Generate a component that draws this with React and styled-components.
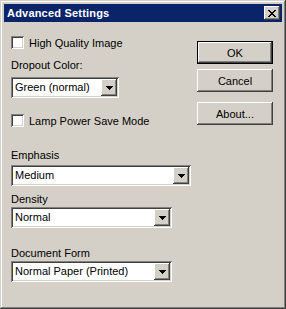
import React from 'react';
import styled, { createGlobalStyle } from 'styled-components';

const GlobalStyle = createGlobalStyle`
  html, body {
    margin: 0;
    padding: 0;
    background: #d4d0c8;
  }
  * {
    box-sizing: border-box;
  }
`;

const raised = `
  box-shadow:
    inset -1px -1px #404040,
    inset 1px 1px #ffffff,
    inset -2px -2px #808080,
    inset 2px 2px #d4d0c8;
`;

const sunken = `
  box-shadow:
    inset 1px 1px #808080,
    inset -1px -1px #ffffff,
    inset 2px 2px #404040,
    inset -2px -2px #d4d0c8;
`;

const Window = styled.div`
  width: 286px;
  height: 309px;
  padding: 4px;
  background: #d4d0c8;
  font-family: "Liberation Sans", Arial, sans-serif;
  font-size: 11px;
  color: #000;
  box-shadow:
    inset -1px -1px #404040,
    inset 1px 1px #d4d0c8,
    inset -2px -2px #808080,
    inset 2px 2px #ffffff;
`;

const TitleBar = styled.div`
  height: 18px;
  background: #0a246a;
  display: flex;
  align-items: center;
  justify-content: space-between;
  padding: 0 2px 0 3px;
`;

const Title = styled.span`
  color: #fff;
  font-weight: bold;
  font-size: 11px;
  letter-spacing: 0.2px;
`;

const CloseButton = styled.div`
  width: 16px;
  height: 14px;
  background: #d4d0c8;
  ${raised}
  display: flex;
  align-items: center;
  justify-content: center;
  padding-right: 1px;
`;

const Body = styled.div`
  display: flex;
  justify-content: space-between;
  padding: 11px 9px 0 7px;
`;

const LeftColumn = styled.div`
  display: flex;
  flex-direction: column;
`;

const RightColumn = styled.div`
  display: flex;
  flex-direction: column;
  padding-top: 8px;
`;

const CheckRow = styled.label`
  display: flex;
  align-items: center;
  gap: 5px;
  height: 13px;
  margin-top: ${p => p.$top || 0}px;
`;

const CheckBox = styled.span`
  width: 13px;
  height: 13px;
  background: #fff;
  ${sunken}
`;

const Label = styled.div`
  line-height: 13px;
  height: 13px;
  margin-top: ${p => p.$top || 0}px;
  margin-bottom: ${p => p.$bottom || 0}px;
`;

const Select = styled.div`
  width: ${p => p.$width}px;
  height: 21px;
  background: #fff;
  ${sunken}
  display: flex;
  align-items: center;
  padding: 2px;
`;

const SelectValue = styled.span`
  flex: 1;
  padding-left: 2px;
  line-height: 17px;
  white-space: nowrap;
`;

const DropButton = styled.span`
  width: 16px;
  height: 17px;
  background: #d4d0c8;
  ${raised}
  display: flex;
  align-items: center;
  justify-content: center;
`;

const Button = styled.div`
  width: 76px;
  height: 23px;
  margin-top: ${p => p.$top || 0}px;
  display: flex;
  align-items: center;
  justify-content: center;
  background: #d4d0c8;
  ${p =>
    p.$default
      ? `box-shadow:
          inset 0 0 0 1px #000,
          inset -2px -2px #404040,
          inset 2px 2px #ffffff,
          inset -3px -3px #808080;`
      : raised}
`;

const Arrow = () => (
  <svg width="7" height="4" viewBox="0 0 7 4" shapeRendering="crispEdges">
    <path d="M0 0h7v1H0zM1 1h5v1H1zM2 2h3v1H2zM3 3h1v1H3z" fill="#000" />
  </svg>
);

const CloseIcon = () => (
  <svg width="8" height="7" viewBox="0 0 8 7" shapeRendering="crispEdges">
    <path
      d="M0 0h2v1H0zM6 0h2v1H6zM1 1h2v1H1zM5 1h2v1H5zM2 2h4v1H2zM3 3h2v1H3zM2 4h4v1H2zM1 5h2v1H1zM5 5h2v1H5zM0 6h2v1H0zM6 6h2v1H6z"
      fill="#000"
    />
  </svg>
);

const Dropdown = ({ value, width }) => (
  <Select $width={width}>
    <SelectValue>{value}</SelectValue>
    <DropButton>
      <Arrow />
    </DropButton>
  </Select>
);

export default function App() {
  return (
    <>
      <GlobalStyle />
      <Window>
        <TitleBar>
          <Title>Advanced Settings</Title>
          <CloseButton>
            <CloseIcon />
          </CloseButton>
        </TitleBar>
        <Body>
          <LeftColumn>
            <CheckRow $top={3}>
              <CheckBox />
              High Quality Image
            </CheckRow>
            <Label $top={10} $bottom={5}>Dropout Color:</Label>
            <Dropdown value="Green (normal)" width={108} />
            <CheckRow $top={16}>
              <CheckBox />
              Lamp Power Save Mode
            </CheckRow>
            <Label $top={22} $bottom={3}>Emphasis</Label>
            <Dropdown value="Medium" width={180} />
            <Label $top={7} $bottom={1}>Density</Label>
            <Dropdown value="Normal" width={161} />
            <Label $top={19} $bottom={1}>Document Form</Label>
            <Dropdown value="Normal Paper (Printed)" width={161} />
          </LeftColumn>
          <RightColumn>
            <Button $default>OK</Button>
            <Button $top={5}>Cancel</Button>
            <Button $top={10}>About...</Button>
          </RightColumn>
        </Body>
      </Window>
    </>
  );
}
